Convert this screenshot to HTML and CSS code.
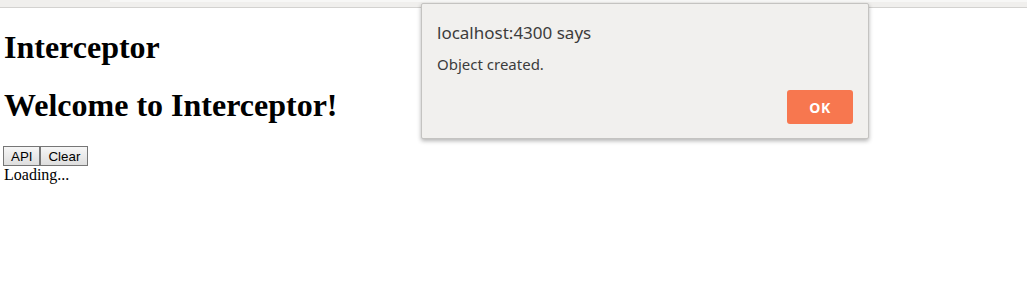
FILE: index.html
```html
<!DOCTYPE html>
<html>
<head>
<meta charset="utf-8">
<link rel="stylesheet" href="styles.css">
</head>
<body>
<div class="chrome"><div class="tab-left"></div><div class="tab-right"></div></div>
<div class="page">
  <h1 class="title">Interceptor</h1>
  <h2 class="welcome">Welcome to Interceptor!</h2>
  <div class="actions"><button class="btn">API</button><button class="btn">Clear</button></div>
  <div class="loading">Loading...</div>
</div>
<div class="dialog">
  <div class="dialog-title">localhost:4300 says</div>
  <div class="dialog-msg">Object created.</div>
  <div class="dialog-actions"><button class="ok">OK</button></div>
</div>
</body>
</html>
```
FILE: styles.css
```css
html, body { margin: 0; padding: 0; background: #fff; }
body { font-family: "Liberation Serif", serif; position: relative; width: 1027px; height: 295px; overflow: hidden; }
.chrome { height: 7px; display: flex; border-bottom: 1px solid #d3d2d0; background: #f0efed; }
.tab-left { width: 110px; background: #f0efed; }
.tab-right { flex: 1; border-top: 2px solid #f7f7f6; }
.page { padding: 0 4px 0 3px; }
.title { font-size: 32px; font-weight: bold; margin: 21px 0 21px 1px; line-height: 37px; }
.welcome { font-size: 32px; font-weight: bold; margin: 0 0 22px 1px; line-height: 37px; }
.actions { display: flex; }
.btn { font-family: "Liberation Sans", sans-serif; font-size: 13.33px; padding: 1px 7px; margin: 0; border: 1px solid #767676; background: linear-gradient(#f6f6f6, #dedede); color: #000; height: 20px; }
.loading { font-size: 16px; line-height: 18px; margin-left: 1px; }
.dialog { position: absolute; left: 421px; top: 3px; background: #f1f0ee; border: 1px solid #c4c3c1; border-radius: 2px; box-shadow: 0 2px 4px rgba(0,0,0,0.3); font-family: "Noto Sans", sans-serif; color: #3c3c3c; display: flex; flex-direction: column; padding: 0 15px 0 15px; box-sizing: border-box; width: 448px; height: 136px; }
.dialog-title { font-size: 17px; margin-top: 17px; line-height: 24px; }
.dialog-msg { font-size: 15px; margin-top: 8px; line-height: 22px; }
.dialog-actions { display: flex; justify-content: flex-end; margin-top: 15px; }
.ok { width: 66px; height: 34px; border: none; border-radius: 3px; background: #f7774f; color: #fff; font-family: "Noto Sans", sans-serif; font-weight: bold; font-size: 14px; letter-spacing: 0.5px; }
```
